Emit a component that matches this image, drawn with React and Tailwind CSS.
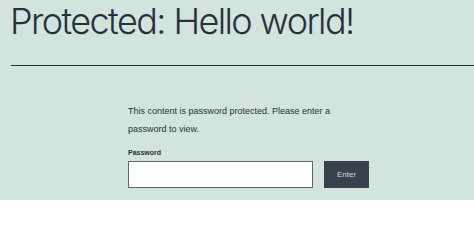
export default function App() {
  return (
    <div className="w-[474px] h-[200px] overflow-hidden bg-[#d1e4dd] text-[#28303d] font-['Liberation_Sans',Arial,sans-serif]">
      <h1 className="pl-[10px] text-[36px] leading-[42px] font-light tracking-[-1.6px] whitespace-nowrap font-['Inter','Liberation_Sans',sans-serif]">
        Protected: Hello world!
      </h1>
      <div className="ml-[11px] mt-[23px] h-px bg-[#28303d]" />
      <form className="ml-[128px] w-[242px] pt-[37px]" onSubmit={(e) => e.preventDefault()}>
        <p className="text-[9px] leading-[17.5px]">
          This content is password protected. Please enter a password to view.
        </p>
        <label className="block mt-[10px] text-[7px] leading-[9px] font-semibold">Password</label>
        <div className="mt-[4px] flex items-center gap-[11px]">
          <input
            type="password"
            className="w-[185px] h-[27px] bg-white border-[1.5px] border-[#5f666d] outline-none"
          />
          <button className="w-[45px] h-[27px] bg-[#39414d] text-[#d1d5d8] text-[8px]">Enter</button>
        </div>
      </form>
    </div>
  );
}
